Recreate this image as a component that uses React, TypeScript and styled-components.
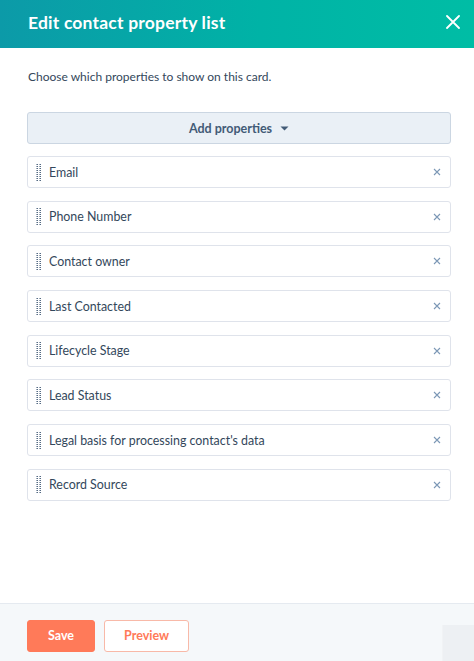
import React from 'react';
import styled, { createGlobalStyle } from 'styled-components';

const colors = {
    text: '#33475b',
    border: '#dfe3eb',
    coral: '#ff7a59',
    panel: '#f5f8fa',
};

const GlobalStyle = createGlobalStyle`
    html, body {
        margin: 0;
        padding: 0;
        background: #ffffff;
    }
    body {
        font-family: Lato, 'Open Sans', sans-serif;
        color: ${colors.text};
    }
`;

const Panel = styled.div`
    position: relative;
    width: 474px;
    height: 661px;
    display: flex;
    flex-direction: column;
    overflow: hidden;
`;

const Header = styled.header`
    height: 48px;
    flex: none;
    display: flex;
    align-items: center;
    justify-content: space-between;
    padding: 0 10px 0 28px;
    background: linear-gradient(90deg, #0c9aa8 0%, #00b3a6 55%, #00bda5 100%);
    color: #ffffff;

    h1 {
        margin: 0 0 4px;
        font-size: 17.5px;
        font-weight: 700;
        letter-spacing: 0.2px;
    }
`;

const CloseButton = styled.button`
    background: none;
    border: none;
    padding: 4px;
    margin-bottom: 4px;
    display: flex;
    cursor: pointer;
`;

const Body = styled.div`
    flex: 1;
    padding: 0 23px 0 27px;
`;

const Intro = styled.p`
    margin: 21px 0 27px 1px;
    font-size: 12px;
    line-height: 16px;
`;

const AddButton = styled.button`
    width: 100%;
    height: 32px;
    display: flex;
    align-items: center;
    justify-content: center;
    gap: 8px;
    background: #eaf0f6;
    border: 1px solid #cbd6e2;
    border-radius: 3px;
    color: #425b76;
    font-family: inherit;
    font-size: 12.5px;
    font-weight: 700;
    cursor: pointer;
`;

const List = styled.ul`
    list-style: none;
    margin: 12px 0 0;
    padding: 0;
    display: flex;
    flex-direction: column;
    gap: 12.7px;
`;

const Row = styled.li`
    height: 32px;
    box-sizing: border-box;
    display: flex;
    align-items: center;
    padding: 0 9px 0 8px;
    border: 1px solid ${colors.border};
    border-radius: 3px;
    background: #ffffff;
    font-size: 12.4px;
`;

const Label = styled.span`
    flex: 1;
    margin-left: 7px;
`;

const Remove = styled.button`
    background: none;
    border: none;
    padding: 0;
    display: flex;
    cursor: pointer;
`;

const Footer = styled.footer`
    height: 58px;
    box-sizing: border-box;
    flex: none;
    display: flex;
    align-items: center;
    gap: 9px;
    padding: 6px 27px 0;
    background: ${colors.panel};
    border-top: 1px solid #e5eaf0;
`;

const Button = styled.button<{ primary?: boolean }>`
    height: 32px;
    padding: 0 ${(p) => (p.primary ? '20px' : '19px')};
    border-radius: 3px;
    font-family: inherit;
    font-size: 12.5px;
    font-weight: 700;
    cursor: pointer;
    color: ${(p) => (p.primary ? '#ffffff' : colors.coral)};
    background: ${(p) => (p.primary ? colors.coral : '#ffffff')};
    border: 1px solid ${(p) => (p.primary ? colors.coral : '#f8b9a8')};
`;

const Widget = styled.div`
    position: absolute;
    right: 0;
    bottom: 0;
    width: 31px;
    height: 36px;
    background: #edf0f3;
    border-left: 1px solid #f1f3f5;
`;

const Grip = () => (
    <svg width="6" height="17" viewBox="0 0 6 17">
        {Array.from({ length: 9 }).map((_, i) => (
            <React.Fragment key={i}>
                <rect x="0.5" y={i * 2} width="1.4" height="1" fill="#425b76" />
                <rect x="3.5" y={i * 2} width="1.4" height="1" fill="#425b76" />
            </React.Fragment>
        ))}
    </svg>
);

const properties = [
    'Email',
    'Phone Number',
    'Contact owner',
    'Last Contacted',
    'Lifecycle Stage',
    'Lead Status',
    "Legal basis for processing contact's data",
    'Record Source',
];

export default function App() {
    return (
        <Panel>
            <GlobalStyle />
            <Header>
                <h1>Edit contact property list</h1>
                <CloseButton aria-label="Close">
                    <svg width="14" height="14" viewBox="0 0 14 14">
                        <path d="M1 1L13 13M13 1L1 13" stroke="#ffffff" strokeWidth="1.8" strokeLinecap="round" />
                    </svg>
                </CloseButton>
            </Header>
            <Body>
                <Intro>Choose which properties to show on this card.</Intro>
                <AddButton type="button">
                    Add properties
                    <svg width="9" height="5" viewBox="0 0 9 5">
                        <path d="M0.5 0.5H8.5L4.5 4.5Z" fill="#425b76" />
                    </svg>
                </AddButton>
                <List>
                    {properties.map((name) => (
                        <Row key={name}>
                            <Grip />
                            <Label>{name}</Label>
                            <Remove aria-label={`Remove ${name}`}>
                                <svg width="8" height="8" viewBox="0 0 8 8">
                                    <path d="M1 1L7 7M7 1L1 7" stroke="#7c98b6" strokeWidth="1.1" />
                                </svg>
                            </Remove>
                        </Row>
                    ))}
                </List>
            </Body>
            <Footer>
                <Button primary type="button">Save</Button>
                <Button type="button">Preview</Button>
            </Footer>
            <Widget />
        </Panel>
    );
}
